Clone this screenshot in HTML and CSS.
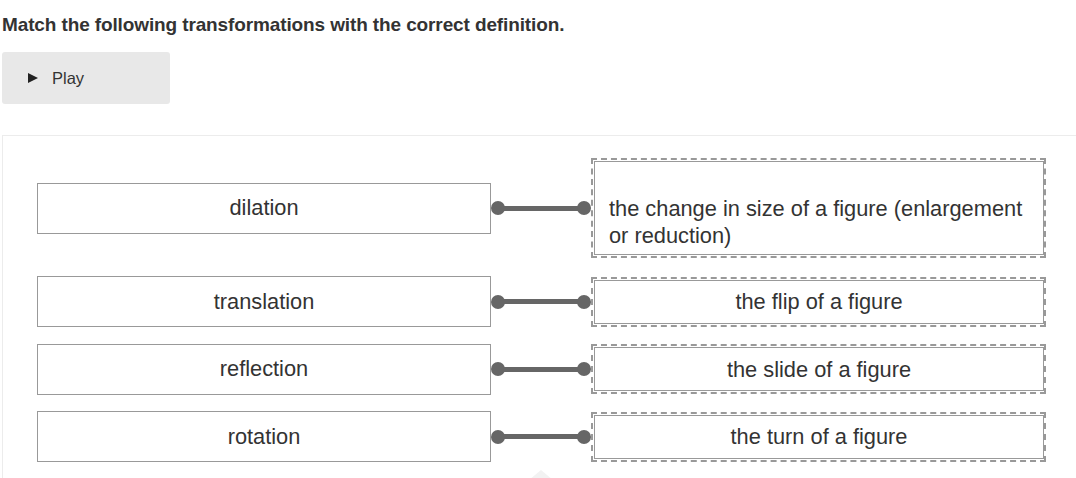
FILE: index.html
```html
<!DOCTYPE html>
<html>
<head>
<meta charset="utf-8">
<link rel="stylesheet" href="styles.css">
</head>
<body>
<div class="page">
  <h1 class="title">Match the following transformations with the correct definition.</h1>
  <button class="play"><span class="tri"></span><span class="play-label">Play</span></button>
  <div class="board">
    <div class="row row-first">
      <div class="term">dilation</div>
      <div class="link"><span class="dot"></span><span class="bar"></span><span class="dot"></span></div>
      <div class="slot slot-tall"><div class="def">the change in size of a figure (enlargement or reduction)</div></div>
    </div>
    <div class="row">
      <div class="term">translation</div>
      <div class="link"><span class="dot"></span><span class="bar"></span><span class="dot"></span></div>
      <div class="slot"><div class="def">the flip of a figure</div></div>
    </div>
    <div class="row">
      <div class="term">reflection</div>
      <div class="link"><span class="dot"></span><span class="bar"></span><span class="dot"></span></div>
      <div class="slot"><div class="def">the slide of a figure</div></div>
    </div>
    <div class="row">
      <div class="term">rotation</div>
      <div class="link"><span class="dot"></span><span class="bar"></span><span class="dot"></span></div>
      <div class="slot"><div class="def">the turn of a figure</div></div>
    </div>
    <span class="pointer"></span>
  </div>
</div>
</body>
</html>
```
FILE: styles.css
```css
html, body {
  margin: 0;
  padding: 0;
  background: #fff;
}
body {
  font-family: "Liberation Sans", Arial, sans-serif;
  color: #333;
  overflow: hidden;
}
.page {
  padding-left: 2px;
}
.title {
  margin: 0;
  padding-top: 14px;
  font-size: 19px;
  line-height: 21px;
  font-weight: bold;
  color: #333;
  letter-spacing: -0.12px;
}
.play {
  margin-top: 17px;
  width: 168px;
  height: 52px;
  border: none;
  border-radius: 3px;
  background: #e8e8e8;
  display: flex;
  align-items: center;
  padding: 0 0 0 26px;
  font-family: "Liberation Sans", Arial, sans-serif;
  font-size: 16.5px;
  color: #333;
}
.tri {
  width: 0;
  height: 0;
  border-top: 5.5px solid transparent;
  border-bottom: 5.5px solid transparent;
  border-left: 10px solid #222;
  margin-right: 14px;
}
.board {
  position: relative;
  margin-top: 31px;
  border-top: 1px solid #ececec;
  border-left: 1px solid #ececec;
  padding: 22px 0 20px 34px;
  display: flex;
  flex-direction: column;
  gap: 16.5px;
  height: 400px;
}
.row {
  display: flex;
  align-items: center;
}
.row-first {
  margin-bottom: 1.5px;
}
.term {
  width: 452px;
  height: 49px;
  border: 1px solid #999;
  display: flex;
  align-items: center;
  justify-content: center;
  font-size: 21.8px;
  color: #333;
}
.link {
  width: 100px;
  display: flex;
  align-items: center;
  box-sizing: border-box;
}
.dot {
  width: 14px;
  height: 14px;
  border-radius: 50%;
  background: #666;
  flex: none;
}
.bar {
  flex: 1;
  height: 5px;
  background: #666;
  margin: 0 -2px;
}
.slot {
  width: 450px;
  height: 44px;
  border: 2px dashed #999;
  padding: 1px 0 1px 1px;
  box-sizing: content-box;
}
.slot-tall {
  height: 94px;
}
.def {
  height: 100%;
  box-sizing: border-box;
  border: 1px solid #999;
  background: #fff;
  display: flex;
  align-items: center;
  justify-content: center;
  font-size: 21.8px;
  line-height: 27px;
  color: #333;
  padding: 0 14px;
}
.slot-tall .def {
  padding-top: 27px;
}
.pointer {
  position: absolute;
  left: 526px;
  top: 334px;
  width: 0;
  height: 0;
  border-left: 12px solid transparent;
  border-right: 12px solid transparent;
  border-bottom: 10px solid #f2f2f2;
}
```
